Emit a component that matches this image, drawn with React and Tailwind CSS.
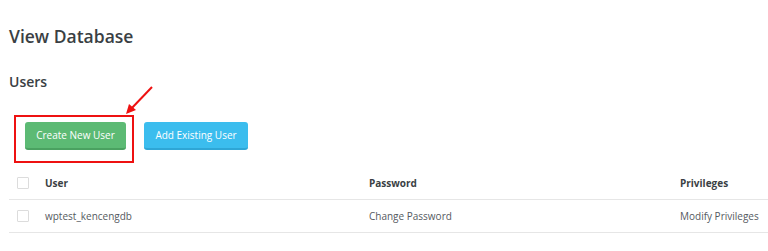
import React from 'react';

const Checkbox = () => (
  <span className="block w-3 h-3 border border-[#dcdcdc] bg-white rounded-[1px]" />
);

const rows = [
  { user: 'wptest_kencengdb', password: 'Change Password', privileges: 'Modify Privileges' },
];

const App = () => {
  return (
    <div className="relative w-[768px] h-[251px] overflow-hidden bg-white pl-[9px] pt-[24px] font-['Open_Sans',sans-serif]">
      <h1 className="text-[17.5px] leading-[24px] font-semibold text-[#3a3f44]">View Database</h1>
      <h2 className="mt-[24px] text-[14px] leading-[20px] font-semibold text-[#3a3f44]">Users</h2>

      <div className="mt-[30px] flex gap-[18px] pl-[16px]">
        <button className="w-[101px] h-[28px] rounded-[3px] bg-[#5cba74] border-b-2 border-[#4aa160] text-[10px] text-white">
          Create New User
        </button>
        <button className="w-[104px] h-[28px] rounded-[3px] bg-[#3bbdee] border-b-2 border-[#2ea6d6] text-[10px] text-white">
          Add Existing User
        </button>
      </div>

      <div className="mt-[17px] w-[759px] text-[10px]">
        <div className="flex items-center h-[33px] pl-[8px] border-b border-[#e6e6e6] font-bold text-[#3a3f44]">
          <Checkbox />
          <span className="ml-4 w-[324px]">User</span>
          <span className="w-[311px]">Password</span>
          <span>Privileges</span>
        </div>
        {rows.map((row, index) => (
          <div key={index} className="flex items-center h-[33px] pl-[8px] border-b border-[#e6e6e6] text-[#555a5f]">
            <Checkbox />
            <span className="ml-4 w-[324px]">{row.user}</span>
            <span className="w-[311px]">{row.password}</span>
            <span>{row.privileges}</span>
          </div>
        ))}
      </div>

      {/* annotation: red box + arrow */}
      <div className="absolute left-[14px] top-[115px] w-[120px] h-[48px] border-2 border-[#ee1111]" />
      <svg className="absolute left-[120px] top-[82px]" width="40" height="36" viewBox="0 0 40 36">
        <line x1="32" y1="5" x2="10" y2="28" stroke="#ee1111" strokeWidth="2" />
        <polygon points="6,32 9,22 16,28" fill="#ee1111" />
      </svg>
    </div>
  );
};

export default App;
